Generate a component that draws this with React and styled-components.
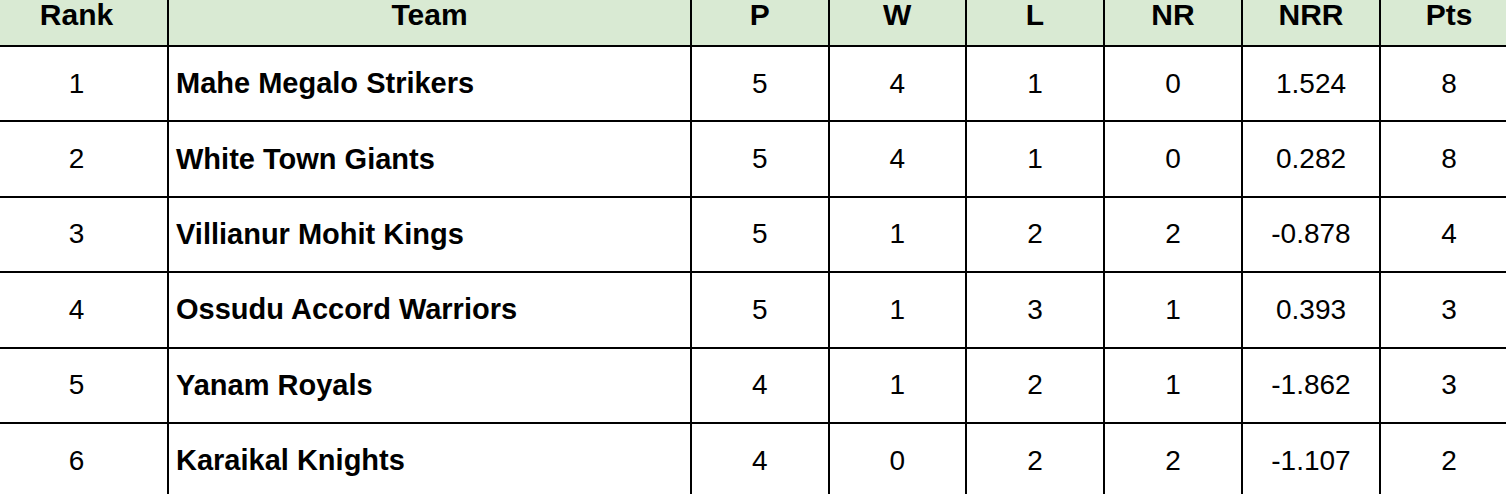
import React from 'react';
import styled, { createGlobalStyle } from 'styled-components';

const HEADER_GREEN = '#d9ead3';

const GlobalStyle = createGlobalStyle`
    html, body {
        margin: 0;
        padding: 0;
        background: #ffffff;
        overflow: hidden;
    }
    body {
        font-family: "Liberation Sans", Arial, sans-serif;
        color: #000;
    }
`

const Frame = styled.div`
    width: 1506px;
    height: 494px;
    overflow: hidden;
`

const Table = styled.table`
    margin: -16px 0 0 -16px;
    border-collapse: collapse;
    table-layout: fixed;
    width: 1533px;
`

const HeadCell = styled.th`
    background: ${HEADER_GREEN};
    border: 2px solid #000;
    height: 57px;
    padding: 0 0 2px;
    font-size: 30px;
    font-weight: 700;
    text-align: center;
    vertical-align: middle;
`

const Cell = styled.td`
    border: 2px solid #000;
    height: 73.4px;
    padding: ${p => (p.$team ? '0 0 0 7px' : '0')};
    font-size: ${p => (p.$team ? '29px' : '28px')};
    font-weight: ${p => (p.$team ? 700 : 400)};
    text-align: ${p => (p.$team ? 'left' : 'center')};
    vertical-align: middle;
    white-space: nowrap;
`

const columns = [
    { label: 'Rank', width: 183 },
    { label: 'Team', width: 523 },
    { label: 'P', width: 137.5 },
    { label: 'W', width: 137.5 },
    { label: 'L', width: 138 },
    { label: 'NR', width: 138 },
    { label: 'NRR', width: 138 },
    { label: 'Pts', width: 138 },
];

const standings = [
    [1, 'Mahe Megalo Strikers', 5, 4, 1, 0, '1.524', 8],
    [2, 'White Town Giants', 5, 4, 1, 0, '0.282', 8],
    [3, 'Villianur Mohit Kings', 5, 1, 2, 2, '-0.878', 4],
    [4, 'Ossudu Accord Warriors', 5, 1, 3, 1, '0.393', 3],
    [5, 'Yanam Royals', 4, 1, 2, 1, '-1.862', 3],
    [6, 'Karaikal Knights', 4, 0, 2, 2, '-1.107', 2],
];

export default function App() {
    return (
        <Frame>
            <GlobalStyle />
            <Table>
                <colgroup>
                    {columns.map(c => <col key={c.label} style={{ width: c.width }} />)}
                </colgroup>
                <thead>
                    <tr>
                        {columns.map(c => <HeadCell key={c.label}>{c.label}</HeadCell>)}
                    </tr>
                </thead>
                <tbody>
                    {standings.map(row => (
                        <tr key={row[0]}>
                            {row.map((v, i) => (
                                <Cell key={i} $team={i === 1}>{v}</Cell>
                            ))}
                        </tr>
                    ))}
                </tbody>
            </Table>
        </Frame>
    );
}
